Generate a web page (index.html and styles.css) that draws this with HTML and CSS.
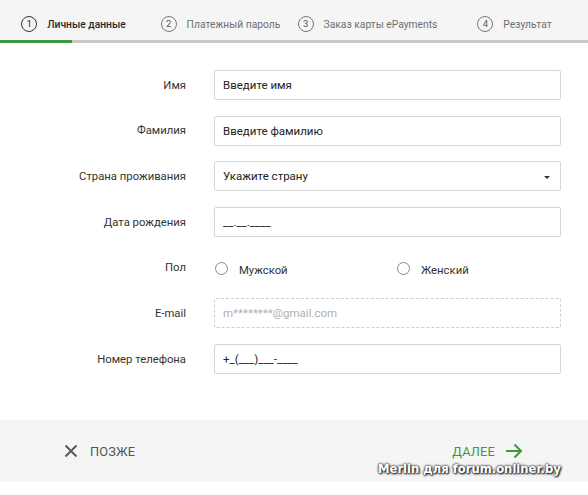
FILE: index.html
```html
<!DOCTYPE html>
<html lang="ru">
<head>
<meta charset="utf-8">
<title>Личные данные</title>
<link rel="stylesheet" href="styles.css">
</head>
<body>
<div class="page">
  <header class="steps">
    <div class="step active"><span class="num">1</span><span class="label">Личные данные</span></div>
    <div class="step"><span class="num">2</span><span class="label">Платежный пароль</span></div>
    <div class="step"><span class="num">3</span><span class="label">Заказ карты ePayments</span></div>
    <div class="step"><span class="num">4</span><span class="label">Результат</span></div>
  </header>
  <div class="progress"><div class="progress-fill"></div></div>

  <form class="form">
    <label class="lbl">Имя</label>
    <div class="field">Введите имя</div>

    <label class="lbl">Фамилия</label>
    <div class="field">Введите фамилию</div>

    <label class="lbl">Страна проживания</label>
    <div class="field select">Укажите страну<span class="caret"></span></div>

    <label class="lbl">Дата рождения</label>
    <div class="field">__.__.____</div>

    <label class="lbl">Пол</label>
    <div class="radios">
      <span class="radio"><span class="dot"></span>Мужской</span>
      <span class="radio"><span class="dot"></span>Женский</span>
    </div>

    <label class="lbl">E-mail</label>
    <div class="field dashed">m********@gmail.com</div>

    <label class="lbl">Номер телефона</label>
    <div class="field">+_(___)___-____</div>
  </form>

  <footer class="footer">
    <div class="later">
      <svg class="x" width="14" height="14" viewBox="0 0 14 14"><path d="M1.5 1.5 L12.5 12.5 M12.5 1.5 L1.5 12.5" stroke="#555" stroke-width="1.8" fill="none"/></svg>
      <span>ПОЗЖЕ</span>
    </div>
    <div class="next">
      <span>ДАЛЕЕ</span>
      <svg class="arrow" width="18" height="16" viewBox="0 0 18 16"><path d="M1 8 H16 M9.5 1.5 L16 8 L9.5 14.5" stroke="#3a9a3a" stroke-width="2" fill="none"/></svg>
    </div>
  </footer>
  <div class="watermark">Merlin для forum.onliner.by</div>
</div>
</body>
</html>
```
FILE: styles.css
```css
html, body {
  margin: 0;
  padding: 0;
  background: #fff;
}
body {
  font-family: Roboto, "Noto Sans", sans-serif;
  color: #333;
}
.page {
  position: relative;
  width: 588px;
  height: 495px;
  overflow: hidden;
}
.steps {
  display: grid;
  grid-template-columns: repeat(4, 1fr);
  height: 40px;
  background: #f5f5f5;
}
.step {
  display: flex;
  align-items: center;
  justify-content: center;
  padding-top: 8px;
  font-size: 10.3px;
  color: #6f6f6f;
}
.step.active {
  color: #2a2a2a;
  font-weight: 500;
}
.num {
  width: 14px;
  height: 14px;
  border: 1px solid #777;
  border-radius: 50%;
  display: inline-flex;
  align-items: center;
  justify-content: center;
  font-size: 9.5px;
  font-weight: 400;
  margin-right: 10px;
  color: #555;
  line-height: 1;
}
.step.active .num {
  border-color: #333;
  color: #222;
}
.progress {
  height: 3px;
  background: #c9c9c9;
}
.progress-fill {
  width: 72px;
  height: 100%;
  background: #3d9a40;
}
.form {
  display: grid;
  grid-template-columns: 158px 1fr;
  column-gap: 28px;
  row-gap: 15.7px;
  grid-auto-rows: 30px;
  padding: 27px 27px 0 28px;
  margin: 0;
  height: 377px;
  box-sizing: border-box;
}
.lbl {
  display: flex;
  align-items: center;
  justify-content: flex-end;
  font-size: 11.3px;
  color: #333;
}
.field {
  display: flex;
  align-items: center;
  border: 1px solid #d6d6d6;
  border-radius: 2px;
  padding: 0 8px;
  font-size: 11.5px;
  color: #222;
  position: relative;
}
.field.dashed {
  border-style: dashed;
  border-color: #cfcfcf;
  color: #b0b0b0;
}
.caret {
  position: absolute;
  right: 10px;
  top: 14px;
  width: 0;
  height: 0;
  border-left: 3px solid transparent;
  border-right: 3px solid transparent;
  border-top: 3px solid #333;
}
.radios {
  display: grid;
  grid-template-columns: 182px 1fr;
  align-items: center;
  padding-top: 6px;
}
.radio {
  display: flex;
  align-items: center;
  font-size: 11.3px;
  color: #333;
}
.dot {
  width: 11px;
  height: 11px;
  border: 1px solid #888;
  border-radius: 50%;
  margin: 0 11px 0 1px;
  position: relative;
  top: -2px;
}
.footer {
  height: 62px;
  background: #f5f5f5;
  display: flex;
  align-items: center;
  justify-content: space-between;
  padding: 0 65px 0 64px;
}
.later, .next {
  display: flex;
  align-items: center;
  font-size: 12.8px;
  letter-spacing: 0.2px;
}
.later { color: #555; }
.later .x { margin-right: 12px; }
.next { color: #3a9a3a; }
.next .arrow { margin-left: 10px; }
.watermark {
  position: absolute;
  left: 378px;
  top: 462px;
  font-family: "DejaVu Sans", Verdana, sans-serif;
  font-weight: bold;
  font-size: 11.6px;
  color: #fff;
  text-shadow: 0 0 2px #333, 0 0 3px #333, 1px 1px 2px #000;
  white-space: nowrap;
}
```
